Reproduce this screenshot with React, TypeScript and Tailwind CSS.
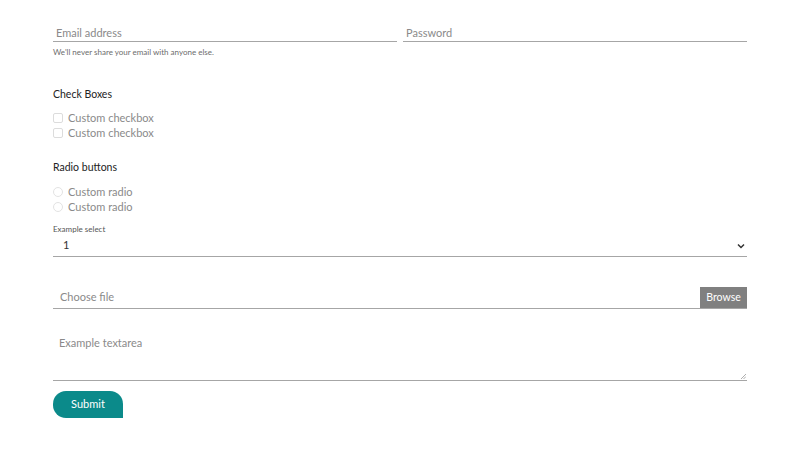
import React from "react";

export default function App() {
  const font = { fontFamily: '"Segoe UI", Lato, "Open Sans", sans-serif' };
  return (
    <div className="w-[800px] h-[450px] bg-white px-[53px] pt-[22px]" style={font}>
      <div className="grid grid-cols-2 gap-[6px]">
        <div className="h-[20px] border-b border-[#a6a6a6] flex items-end pb-[1px] pl-[3px] text-[11px] leading-[14px] text-[#8a8a8a]">
          Email address
        </div>
        <div className="h-[20px] border-b border-[#a6a6a6] flex items-end pb-[1px] pl-[3px] text-[11px] leading-[14px] text-[#8a8a8a]">
          Password
        </div>
      </div>
      <div className="mt-[4px] text-[8px] text-[#6c6c6c] leading-[12px]">We'll never share your email with anyone else.</div>

      <div className="mt-[29px] text-[10.5px] text-[#222] leading-[14px]">Check Boxes</div>
      <div className="mt-[10px] flex flex-col gap-[1px]">
        {["Custom checkbox", "Custom checkbox"].map((t, i) => (
          <div key={i} className="flex items-center h-[14px] text-[11px] text-[#8a8a8a]">
            <span className="w-[10px] h-[10px] border border-[#dcdcdc] rounded-[2px] mr-[5px]" />
            {t}
          </div>
        ))}
      </div>

      <div className="mt-[20px] text-[10.5px] text-[#222] leading-[14px]">Radio buttons</div>
      <div className="mt-[11px] flex flex-col gap-[1px]">
        {["Custom radio", "Custom radio"].map((t, i) => (
          <div key={i} className="flex items-center h-[14px] text-[11px] text-[#8a8a8a]">
            <span className="w-[10px] h-[10px] border border-[#e3e3e3] rounded-full mr-[5px]" />
            {t}
          </div>
        ))}
      </div>

      <div className="mt-[9px] text-[8px] text-[#555] leading-[12px]">Example select</div>
      <div className="h-[22px] border-b border-[#a6a6a6] flex items-center justify-between pl-[10px] pr-[2px] text-[11px] text-[#333]">
        <span>1</span>
        <svg width="8" height="6" viewBox="0 0 8 6">
          <path d="M1 1.5 L4 4.5 L7 1.5" fill="none" stroke="#333" strokeWidth="1.5" />
        </svg>
      </div>

      <div className="mt-[30px] h-[22px] border-b border-[#a6a6a6] flex items-center justify-between text-[11px]">
        <span className="pl-[7px] text-[#8a8a8a]">Choose file</span>
        <span className="h-[21px] w-[47px] bg-[#808080] text-white flex items-center justify-center text-[10.5px]">Browse</span>
      </div>

      <div className="mt-[14px] h-[58px] border-b border-[#a6a6a6] relative text-[11px] text-[#8a8a8a] pl-[6px] pt-[12px]">
        Example textarea
        <svg className="absolute right-[1px] bottom-[1px]" width="5" height="5" viewBox="0 0 5 5">
          <path d="M5 0 L0 5 M5 2.5 L2.5 5" stroke="#999" strokeWidth="0.8" />
        </svg>
      </div>

      <button className="mt-[10px] w-[70px] h-[27px] bg-[#0b8a8a] text-white text-[11px] rounded-tl-[13px] rounded-tr-[13px] rounded-bl-[13px] rounded-br-none">
        Submit
      </button>
    </div>
  );
}
